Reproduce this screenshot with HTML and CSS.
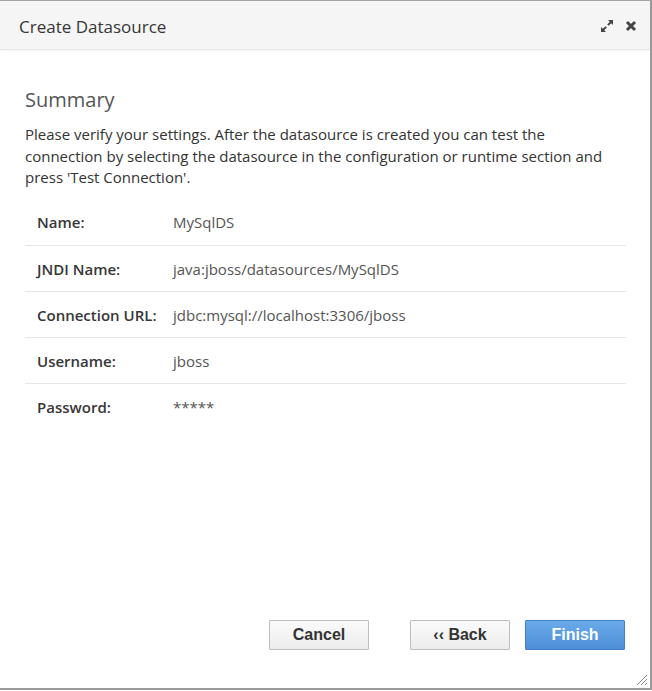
FILE: index.html
```html
<!DOCTYPE html>
<html lang="en">
<head>
  <meta charset="UTF-8">
  <title>Create Datasource</title>
  <link rel="stylesheet" href="styles.css">
</head>
<body>
  <div class="dialog">
    <header class="dialog-head">
      <div class="dialog-title">Create Datasource</div>
      <div class="head-tools">
        <svg class="tool" width="14" height="14" viewBox="0 0 14 14">
          <path d="M8 1h5v5l-1.8-1.8-2.6 2.6-1.4-1.4 2.6-2.6z" fill="#444"/>
          <path d="M6 13H1V8l1.8 1.8 2.6-2.6 1.4 1.4-2.6 2.6z" fill="#444"/>
        </svg>
        <svg class="tool" width="12" height="12" viewBox="0 0 12 12">
          <path d="M2 2l8 8M10 2l-8 8" stroke="#444" stroke-width="3"/>
        </svg>
      </div>
    </header>

    <div class="dialog-body">
      <h2>Summary</h2>
      <p class="intro">Please verify your settings. After the datasource is created you can test the connection by selecting the datasource in the configuration or runtime section and press 'Test Connection'.</p>

      <table class="summary">
        <tr><td class="lbl">Name:</td><td>MySqlDS</td></tr>
        <tr><td class="lbl">JNDI Name:</td><td>java:jboss/datasources/MySqlDS</td></tr>
        <tr><td class="lbl">Connection URL:</td><td>jdbc:mysql://localhost:3306/jboss</td></tr>
        <tr><td class="lbl">Username:</td><td>jboss</td></tr>
        <tr><td class="lbl">Password:</td><td>*****</td></tr>
      </table>

      <div class="dialog-foot">
        <button class="btn">Cancel</button>
        <button class="btn back">&lsaquo;&lsaquo; Back</button>
        <button class="btn primary">Finish</button>
      </div>
    </div>

    <svg class="grip" width="14" height="14" viewBox="0 0 14 14">
      <path d="M13 3L3 13M13 7L7 13M13 11L11 13" stroke="#888" stroke-width="1"/>
    </svg>
  </div>
</body>
</html>
```

FILE: styles.css
```css
* {
  box-sizing: border-box;
}
body {
  margin: 0;
  background: #fff;
  font-family: 'Open Sans', sans-serif;
}
.dialog {
  position: relative;
  width: 652px;
  height: 690px;
  border-top: 1px solid #a3a3a3;
  border-right: 2px solid #9a9a9a;
  border-bottom: 2px solid #9a9a9a;
  display: flex;
  flex-direction: column;
  background: #fff;
}
.dialog-head {
  height: 49px;
  background: #f5f5f5;
  border-bottom: 1px solid #e6e6e6;
  box-shadow: 0 1px 2px rgba(0,0,0,0.05);
  display: flex;
  align-items: center;
  justify-content: space-between;
  padding: 2px 13px 0 19px;
}
.dialog-title {
  font-size: 17px;
  color: #363636;
}
.head-tools {
  display: flex;
  align-items: center;
  gap: 11px;
}
.dialog-body {
  flex: 1;
  display: flex;
  flex-direction: column;
  padding: 36px 25px 38px 25px;
}
.dialog-body h2 {
  margin: 0 0 11px;
  font-size: 20px;
  font-weight: 400;
  color: #555;
}
.intro {
  margin: 0 0 11px;
  font-size: 15px;
  line-height: 21.5px;
  color: #333;
}
.summary {
  width: 601px;
  border-collapse: collapse;
  table-layout: fixed;
  font-size: 15px;
}
.summary td {
  height: 46px;
  padding: 0 12px;
  color: #555;
  white-space: nowrap;
  border-bottom: 1px solid #e5e5e5;
}
.summary tr:last-child td {
  border-bottom: none;
}
.summary td.lbl {
  width: 136px;
  padding-right: 0;
  font-weight: 600;
  color: #363636;
}
.dialog-foot {
  margin-top: auto;
  display: flex;
  justify-content: flex-end;
}
.btn {
  width: 100px;
  height: 30px;
  margin-left: 15px;
  font-family: 'Liberation Sans', Arial, sans-serif;
  font-size: 16px;
  font-weight: bold;
  color: #333;
  background: linear-gradient(#fafafa, #ececec);
  border: 1px solid #bdbdbd;
  border-radius: 1px;
}
.btn.back {
  margin-left: 41px;
}
.btn.primary {
  color: #fff;
  background: linear-gradient(#6aaaea, #4d8fd8);
  border-color: #3f7fc8;
}
.grip {
  position: absolute;
  right: 2px;
  bottom: 2px;
}
```
